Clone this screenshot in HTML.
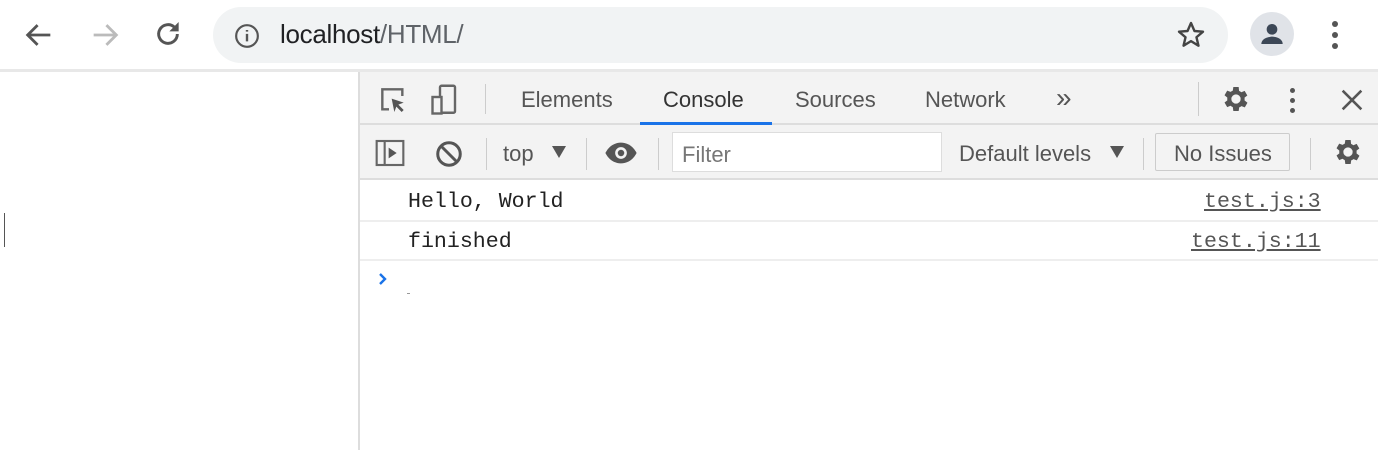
<!DOCTYPE html>
<html><head><style>
*{margin:0;padding:0;box-sizing:border-box}
body{width:1378px;height:450px;overflow:hidden;background:#fff;font-family:"Liberation Sans",sans-serif;position:relative}
.a{position:absolute}
.ui{color:#555;font-size:22px}
.mono{font-family:"Liberation Mono",monospace;font-size:21.6px;color:#222}
.link{font-family:"Liberation Mono",monospace;font-size:21.6px;color:#555;text-decoration:underline}
</style></head><body>
<div class="a" style="left:0;top:0;width:1378px;height:70px;background:#fff"></div>
<svg class="a" style="left:22px;top:18px" width="34" height="34" viewBox="0 0 24 24"><path d="M20 12H5M11 5l-7 7 7 7" fill="none" stroke="#555" stroke-width="2"/></svg>
<svg class="a" style="left:88px;top:18px" width="34" height="34" viewBox="0 0 24 24"><path d="M4 12h15M13 5l7 7-7 7" fill="none" stroke="#bbb" stroke-width="2"/></svg>
<svg class="a" style="left:152px;top:18px" width="32" height="32" viewBox="0 0 24 24"><path d="M19 12a7 7 0 1 1-2.2-5.1" fill="none" stroke="#555" stroke-width="2.2"/><path d="M20 3v7h-7z" fill="#555"/></svg>
<div class="a" style="left:213px;top:7px;width:1015px;height:56px;border-radius:28px;background:#f1f3f4"></div>
<svg class="a" style="left:234px;top:23px" width="26" height="26" viewBox="0 0 24 24"><circle cx="12" cy="12" r="10" fill="none" stroke="#555" stroke-width="2"/><path d="M12 10v7M12 6.5v1.5" stroke="#555" stroke-width="2.2"/></svg>
<div class="a" style="left:280px;top:19px;font-size:26px;color:#202124;letter-spacing:-0.3px">localhost<span style="color:#5f6368">/HTML/</span></div>
<svg class="a" style="left:1175px;top:19px" width="32" height="32" viewBox="0 0 24 24"><path d="M12 3l2.6 6 6.4.5-4.9 4.2 1.5 6.3L12 16.6 6.4 20l1.5-6.3L3 9.5 9.4 9z" fill="none" stroke="#444" stroke-width="1.8" stroke-linejoin="round"/></svg>
<div class="a" style="left:1250px;top:12px;width:44px;height:44px;border-radius:50%;background:#e0e3e8"></div>
<svg class="a" style="left:1256px;top:18px" width="32" height="32" viewBox="0 0 24 24"><circle cx="12" cy="8.5" r="4" fill="#3c4756"/><path d="M4 19.5c0-4 5-5.5 8-5.5s8 1.5 8 5.5z" fill="#3c4756"/></svg>
<div class="a" style="left:1332px;top:21px;width:6px;height:6px;border-radius:50%;background:#555;box-shadow:0 11px 0 #555,0 22px 0 #555"></div>
<div class="a" style="left:0;top:69px;width:1378px;height:3px;background:#e8e8e8"></div>
<div class="a" style="left:4px;top:213px;width:1px;height:34px;background:#555"></div>
<div class="a" style="left:358px;top:72px;width:2px;height:378px;background:#ddd"></div>
<div class="a" style="left:360px;top:72px;width:1018px;height:53px;background:#f3f3f3;border-bottom:2px solid #ddd"></div>
<svg class="a" style="left:377px;top:84px" width="32" height="32" viewBox="0 0 24 24"><path d="M9 19H4V4h15v5" fill="none" stroke="#666" stroke-width="1.8"/><path d="M11 11l9 3-4 1.5 4 4-1.5 1.5-4-4L13 21z" fill="#555"/></svg>
<svg class="a" style="left:428px;top:82px" width="36" height="36" viewBox="0 0 24 24"><rect x="8" y="2.5" width="10" height="18" rx="1" fill="none" stroke="#666" stroke-width="1.6"/><rect x="3" y="10" width="6" height="11" fill="#f3f3f3" stroke="#666" stroke-width="1.6"/></svg>
<div class="a" style="left:485px;top:84px;width:1px;height:30px;background:#ccc"></div>
<div class="a ui" style="left:521px;top:87px">Elements</div>
<div class="a ui" style="left:663px;top:87px;color:#333">Console</div>
<div class="a" style="left:640px;top:122px;width:132px;height:3px;background:#1a73e8"></div>
<div class="a ui" style="left:795px;top:87px">Sources</div>
<div class="a ui" style="left:925px;top:87px">Network</div>
<div class="a ui" style="left:1056px;top:82px;font-size:28px">»</div>
<div class="a" style="left:1198px;top:82px;width:1px;height:34px;background:#ccc"></div>
<svg class="a" style="left:1220px;top:83px" width="32" height="32" viewBox="0 0 24 24"><path fill="#555" d="M19.4 13a7.5 7.5 0 0 0 0-2l2.1-1.6-2-3.5-2.5 1a7 7 0 0 0-1.7-1L15 3h-4l-.4 2.7a7 7 0 0 0-1.7 1l-2.5-1-2 3.5L6.5 11a7.5 7.5 0 0 0 0 2l-2.1 1.6 2 3.5 2.5-1a7 7 0 0 0 1.7 1L11 21h4l.4-2.7a7 7 0 0 0 1.7-1l2.5 1 2-3.5zM13 15.5a3.5 3.5 0 1 1 0-7 3.5 3.5 0 0 1 0 7z" transform="translate(-1 0)"/></svg>
<div class="a" style="left:1290px;top:88px;width:5px;height:5px;border-radius:50%;background:#555;box-shadow:0 10px 0 #555,0 20px 0 #555"></div>
<svg class="a" style="left:1338px;top:86px" width="28" height="28" viewBox="0 0 24 24"><path d="M4 4l16 16M20 4L4 20" stroke="#555" stroke-width="2.2"/></svg>
<div class="a" style="left:360px;top:125px;width:1018px;height:55px;background:#f3f3f3;border-bottom:2px solid #ddd"></div>
<svg class="a" style="left:374px;top:138px" width="32" height="30" viewBox="0 0 24 22"><rect x="2" y="2" width="20" height="18" fill="none" stroke="#666" stroke-width="1.6"/><path d="M8 2v18" stroke="#666" stroke-width="1.6"/><path d="M11 7l6 4-6 4z" fill="#555"/></svg>
<svg class="a" style="left:434px;top:139px" width="30" height="30" viewBox="0 0 24 24"><circle cx="12" cy="12" r="9" fill="none" stroke="#555" stroke-width="2.4"/><path d="M6 6l12 12" stroke="#555" stroke-width="2.4"/></svg>
<div class="a" style="left:486px;top:138px;width:1px;height:32px;background:#ccc"></div>
<div class="a ui" style="left:503px;top:141px">top</div>
<svg class="a" style="left:552px;top:146px" width="14" height="12" viewBox="0 0 14 12"><path d="M0 0h14L7 12z" fill="#555"/></svg>
<div class="a" style="left:586px;top:138px;width:1px;height:32px;background:#ccc"></div>
<svg class="a" style="left:604px;top:140px" width="34" height="26" viewBox="0 0 26 20"><path d="M1 10c3-6 8-8 12-8s9 2 12 8c-3 6-8 8-12 8S4 16 1 10z" fill="#555"/><circle cx="13" cy="10" r="4.5" fill="#f3f3f3"/><circle cx="13" cy="10" r="2.5" fill="#555"/></svg>
<div class="a" style="left:658px;top:138px;width:1px;height:32px;background:#ccc"></div>
<div class="a" style="left:672px;top:132px;width:270px;height:40px;background:#fff;border:1px solid #ddd"></div>
<div class="a ui" style="left:682px;top:142px;color:#777">Filter</div>
<div class="a ui" style="left:959px;top:141px">Default levels</div>
<svg class="a" style="left:1110px;top:146px" width="14" height="12" viewBox="0 0 14 12"><path d="M0 0h14L7 12z" fill="#555"/></svg>
<div class="a" style="left:1143px;top:138px;width:1px;height:32px;background:#ccc"></div>
<div class="a" style="left:1155px;top:133px;width:135px;height:38px;border:1px solid #ccc;border-radius:2px"></div>
<div class="a ui" style="left:1174px;top:141px">No Issues</div>
<div class="a" style="left:1310px;top:138px;width:1px;height:32px;background:#ccc"></div>
<svg class="a" style="left:1332px;top:136px" width="32" height="32" viewBox="0 0 24 24"><path fill="#555" d="M19.4 13a7.5 7.5 0 0 0 0-2l2.1-1.6-2-3.5-2.5 1a7 7 0 0 0-1.7-1L15 3h-4l-.4 2.7a7 7 0 0 0-1.7 1l-2.5-1-2 3.5L6.5 11a7.5 7.5 0 0 0 0 2l-2.1 1.6 2 3.5 2.5-1a7 7 0 0 0 1.7 1L11 21h4l.4-2.7a7 7 0 0 0 1.7-1l2.5 1 2-3.5zM13 15.5a3.5 3.5 0 1 1 0-7 3.5 3.5 0 0 1 0 7z" transform="translate(-1 0)"/></svg>
<div class="a" style="left:360px;top:220px;width:1018px;height:2px;background:#eee"></div>
<div class="a" style="left:360px;top:259px;width:1018px;height:2px;background:#eee"></div>
<div class="a mono" style="left:408px;top:190px">Hello, World</div>
<div class="a mono" style="left:408px;top:230px">finished</div>
<div class="a link" style="left:1204px;top:190px">test.js:3</div>
<div class="a link" style="left:1191px;top:230px">test.js:11</div>
<svg class="a" style="left:376px;top:271px" width="14" height="16" viewBox="0 0 14 16"><path d="M4 3l5 5-5 5" fill="none" stroke="#1a73e8" stroke-width="2.4"/></svg>
<div class="a" style="left:407px;top:293px;width:3px;height:1px;background:#999"></div>
</body></html>
